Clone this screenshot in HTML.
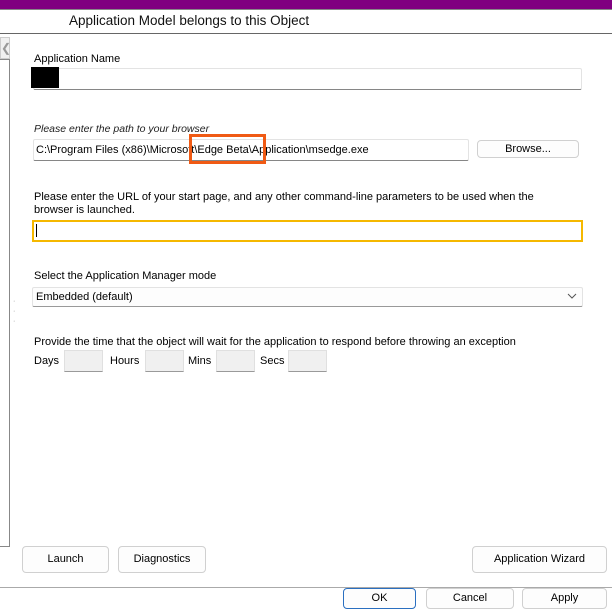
<!DOCTYPE html>
<html><head><style>
*{box-sizing:border-box;margin:0;padding:0}
body{width:612px;height:616px;background:#fff;font-family:"Liberation Sans",sans-serif;font-size:11px;color:#000;position:relative;overflow:hidden}
.a{position:absolute}
.inp{position:absolute;background:#fff;border:1px solid #e3e3e3;border-bottom:1px solid #868686;border-radius:2px}
.btn{position:absolute;background:#fdfdfd;border:1px solid #d0d0d0;border-radius:4px;text-align:center;font-size:11px}
.tb{position:absolute;background:#f0f0f0;border:1px solid #e0e0e0;border-bottom:1px solid #9a9a9a;width:39px;height:22px;top:350px}
</style></head><body>
<div class="a" style="left:0;top:0;width:612px;height:9px;background:#800080"></div>
<div class="a" style="left:0;top:9px;width:612px;height:1px;background:#888"></div>
<div class="a" style="left:69px;top:13px;font-size:13.5px;color:#111">Application Model belongs to this Object</div>
<div class="a" style="left:0;top:33px;width:612px;height:1px;background:#666"></div>
<div class="a" style="left:0;top:37px;width:10px;height:22px;background:#f0f0f0;border:1px solid #ccc;color:#999;font-size:12px;line-height:20px">❮</div>
<div class="a" style="left:0;top:59px;width:10px;height:488px;border:1px solid #888;border-left:none;background:#fff"></div>
<div class="a" style="left:13px;top:297px;color:#888;font-size:7px;line-height:10px">·<br>·<br>·</div>
<div class="a" style="left:34px;top:53px">Application Name</div>
<div class="inp" style="left:33px;top:68px;width:549px;height:22px"></div>
<div class="a" style="left:31px;top:67px;width:28px;height:21px;background:#000"></div>
<div class="a" style="left:34px;top:123px;font-style:italic;font-size:10.5px;color:#222">Please enter the path to your browser</div>
<div class="inp" style="left:33px;top:139px;width:436px;height:22px"></div>
<div class="a" style="left:36px;top:144px">C:\Program Files (x86)\Microsoft\Edge Beta\Application\msedge.exe</div>
<div class="a" style="left:189px;top:134px;width:77px;height:30px;border:3px solid #f05a14"></div>
<div class="btn" style="left:477px;top:140px;width:102px;height:18px;line-height:16px">Browse...</div>
<div class="a" style="left:34px;top:191px;line-height:13px">Please enter the URL of your start page, and any other command-line parameters to be used when the<br>browser is launched.</div>
<div class="a" style="left:32px;top:220px;width:551px;height:22px;border:2px solid #f5b800;background:#fff"></div>
<div class="a" style="left:36px;top:224px;width:1px;height:13px;background:#000"></div>
<div class="a" style="left:34px;top:270px">Select the Application Manager mode</div>
<div class="inp" style="left:32px;top:287px;width:551px;height:20px;background:#fdfdfd;border-bottom:1px solid #999"></div>
<div class="a" style="left:36px;top:291px">Embedded (default)</div>
<svg class="a" style="left:567px;top:293px" width="10" height="7"><path d="M1 1L5 5L9 1" stroke="#555" fill="none"/></svg>
<div class="a" style="left:34px;top:336px">Provide the time that the object will wait for the application to respond before throwing an exception</div>
<div class="a" style="left:34px;top:355px">Days</div>
<div class="tb" style="left:64px"></div>
<div class="a" style="left:110px;top:355px">Hours</div>
<div class="tb" style="left:145px"></div>
<div class="a" style="left:188px;top:355px">Mins</div>
<div class="tb" style="left:216px"></div>
<div class="a" style="left:260px;top:355px">Secs</div>
<div class="tb" style="left:288px"></div>
<div class="btn" style="left:22px;top:546px;width:87px;height:27px;line-height:25px">Launch</div>
<div class="btn" style="left:118px;top:546px;width:88px;height:27px;line-height:25px">Diagnostics</div>
<div class="btn" style="left:472px;top:546px;width:135px;height:27px;line-height:25px">Application Wizard</div>
<div class="a" style="left:0;top:587px;width:612px;height:1px;background:#aaa"></div>
<div class="btn" style="left:343px;top:588px;width:73px;height:21px;line-height:19px;border-color:#2a6fc0">OK</div>
<div class="btn" style="left:426px;top:588px;width:88px;height:21px;line-height:19px">Cancel</div>
<div class="btn" style="left:522px;top:588px;width:85px;height:21px;line-height:19px">Apply</div>
</body></html>
